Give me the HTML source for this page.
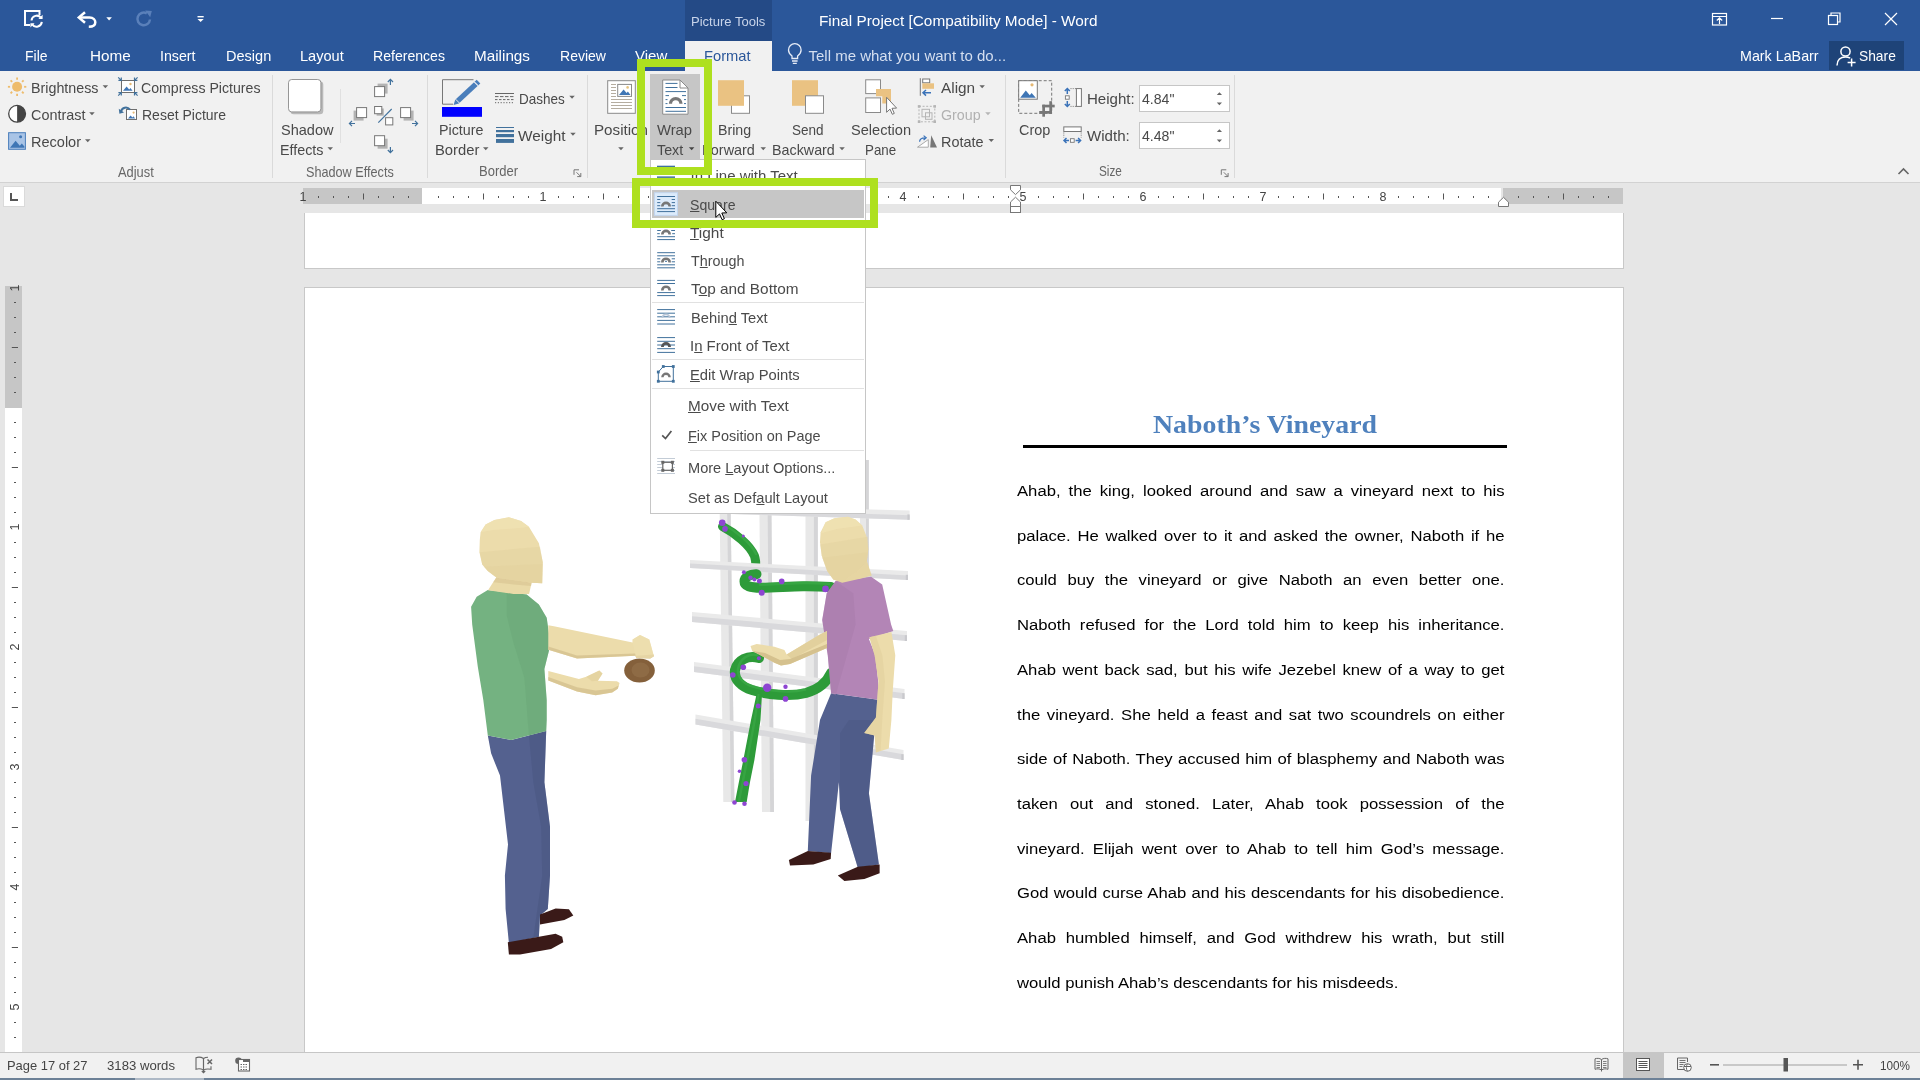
<!DOCTYPE html>
<html lang="en"><head><meta charset="utf-8"><title>Final Project [Compatibility Mode] - Word</title>
<style>

html,body{margin:0;padding:0;}
body{width:1920px;height:1080px;overflow:hidden;position:relative;background:#e6e6e6;font-family:"Liberation Sans",sans-serif;}
.a{position:absolute;}
.t{position:absolute;white-space:pre;line-height:1;transform-origin:0 0;}
#root{position:absolute;left:0;top:0;width:1920px;height:1080px;will-change:transform;}
.t u{text-decoration:underline;text-underline-offset:1px;}
.sep{position:absolute;width:1px;background:#dadada;}
.ln{position:absolute;white-space:nowrap;text-align:justify;text-align-last:justify;line-height:1;color:#000;}
svg{position:absolute;left:0;top:0;overflow:visible;}

</style></head><body>
<div id="root">
<div class="a" style="left:0;top:0;width:1920px;height:71px;background:#2b579a"></div>
<div class="a" style="left:685px;top:0;width:87px;height:41px;background:#244a86"></div>
<div class="a" style="left:0;top:71px;width:1920px;height:111px;background:#f1f1f1"></div>
<div class="a" style="left:685px;top:41px;width:87px;height:31px;background:#f1f1f1"></div>
<div class="a" style="left:0;top:182px;width:1920px;height:1px;background:#d2d2d2"></div>
<div class="a" style="left:1829px;top:41px;width:75px;height:29px;background:#1e4378"></div>
<div class="a" style="left:3px;top:186px;width:22px;height:21px;background:#fff;border:1px solid #dadada;box-sizing:border-box"></div>
<div class="a" style="left:10px;top:193px;width:2px;height:8px;background:#555"></div><div class="a" style="left:10px;top:199px;width:8px;height:2px;background:#555"></div>
<div class="a" style="left:303px;top:188px;width:1320px;height:16px;background:#c6c6c6"></div>
<div class="a" style="left:422px;top:188px;width:1079px;height:16px;background:#fff"></div><div class="a" style="left:1501px;top:188px;width:2px;height:16px;background:#e6e6e6"></div>
<div class="a" style="left:5px;top:286px;width:17px;height:766px;background:#fff"></div>
<div class="a" style="left:5px;top:286px;width:17px;height:122px;background:#c6c6c6"></div>
<div class="a" style="left:304px;top:213px;width:1320px;height:56px;background:#fff;border:1px solid #c8c8c8;border-top:none;box-sizing:border-box"></div>
<div class="a" style="left:304px;top:287px;width:1320px;height:770px;background:#fff;border:1px solid #c8c8c8;box-sizing:border-box"></div>
<svg width="1920" height="1080" viewBox="0 0 1920 1080"><path d="M318.5 196v2M333.5 196v2M348.5 196v2M363.5 193.5v6M378.5 196v2M393.5 196v2M408.5 196v2M438.5 196v2M453.5 196v2M468.5 196v2M483.5 193.5v6M498.5 196v2M513.5 196v2M528.5 196v2M558.5 196v2M573.5 196v2M588.5 196v2M603.5 193.5v6M618.5 196v2M633.5 196v2M648.5 196v2M678.5 196v2M693.5 196v2M708.5 196v2M723.5 193.5v6M738.5 196v2M753.5 196v2M768.5 196v2M798.5 196v2M813.5 196v2M828.5 196v2M843.5 193.5v6M858.5 196v2M873.5 196v2M888.5 196v2M918.5 196v2M933.5 196v2M948.5 196v2M963.5 193.5v6M978.5 196v2M993.5 196v2M1008.5 196v2M1038.5 196v2M1053.5 196v2M1068.5 196v2M1083.5 193.5v6M1098.5 196v2M1113.5 196v2M1128.5 196v2M1158.5 196v2M1173.5 196v2M1188.5 196v2M1203.5 193.5v6M1218.5 196v2M1233.5 196v2M1248.5 196v2M1278.5 196v2M1293.5 196v2M1308.5 196v2M1323.5 193.5v6M1338.5 196v2M1353.5 196v2M1368.5 196v2M1398.5 196v2M1413.5 196v2M1428.5 196v2M1443.5 193.5v6M1458.5 196v2M1473.5 196v2M1488.5 196v2M1518.5 196v2M1533.5 196v2M1548.5 196v2M1563.5 193.5v6M1578.5 196v2M1593.5 196v2M1608.5 196v2" stroke="#555" stroke-width="1"/><text x="303" y="200.6" font-size="12.5" fill="#444" text-anchor="middle" font-family="Liberation Sans, sans-serif">1</text><text x="543" y="200.6" font-size="12.5" fill="#444" text-anchor="middle" font-family="Liberation Sans, sans-serif">1</text><text x="663" y="200.6" font-size="12.5" fill="#444" text-anchor="middle" font-family="Liberation Sans, sans-serif">2</text><text x="783" y="200.6" font-size="12.5" fill="#444" text-anchor="middle" font-family="Liberation Sans, sans-serif">3</text><text x="903" y="200.6" font-size="12.5" fill="#444" text-anchor="middle" font-family="Liberation Sans, sans-serif">4</text><text x="1023" y="200.6" font-size="12.5" fill="#444" text-anchor="middle" font-family="Liberation Sans, sans-serif">5</text><text x="1143" y="200.6" font-size="12.5" fill="#444" text-anchor="middle" font-family="Liberation Sans, sans-serif">6</text><text x="1263" y="200.6" font-size="12.5" fill="#444" text-anchor="middle" font-family="Liberation Sans, sans-serif">7</text><text x="1383" y="200.6" font-size="12.5" fill="#444" text-anchor="middle" font-family="Liberation Sans, sans-serif">8</text><path d="M1010.5 185.5h10v4.3l-5 4.8-5-4.8z" fill="#fff" stroke="#777" stroke-width="1"/><path d="M1010.5 206.5v-4.5l5-4.8 5 4.8v4.5z" fill="#fff" stroke="#777" stroke-width="1"/><rect x="1010.5" y="206.5" width="10" height="6" fill="#fff" stroke="#777" stroke-width="1"/><path d="M1498.5 206.5v-4.3l5-4.9 5 4.9v4.3z" fill="#fff" stroke="#777" stroke-width="1"/><path d="M14 302.5h2M14 317.5h2M14 332.5h2M11.8 347.5h6.2M14 362.5h2M14 377.5h2M14 392.5h2M14 422.5h2M14 437.5h2M14 452.5h2M11.8 467.5h6.2M14 482.5h2M14 497.5h2M14 512.5h2M14 542.5h2M14 557.5h2M14 572.5h2M11.8 587.5h6.2M14 602.5h2M14 617.5h2M14 632.5h2M14 662.5h2M14 677.5h2M14 692.5h2M11.8 707.5h6.2M14 722.5h2M14 737.5h2M14 752.5h2M14 782.5h2M14 797.5h2M14 812.5h2M11.8 827.5h6.2M14 842.5h2M14 857.5h2M14 872.5h2M14 902.5h2M14 917.5h2M14 932.5h2M11.8 947.5h6.2M14 962.5h2M14 977.5h2M14 992.5h2M14 1022.5h2M14 1037.5h2" stroke="#555" stroke-width="1"/><text transform="translate(19 288) rotate(-90)" font-size="12.5" fill="#444" text-anchor="middle" font-family="Liberation Sans, sans-serif">1</text><text transform="translate(19 527) rotate(-90)" font-size="12.5" fill="#444" text-anchor="middle" font-family="Liberation Sans, sans-serif">1</text><text transform="translate(19 647) rotate(-90)" font-size="12.5" fill="#444" text-anchor="middle" font-family="Liberation Sans, sans-serif">2</text><text transform="translate(19 767) rotate(-90)" font-size="12.5" fill="#444" text-anchor="middle" font-family="Liberation Sans, sans-serif">3</text><text transform="translate(19 887) rotate(-90)" font-size="12.5" fill="#444" text-anchor="middle" font-family="Liberation Sans, sans-serif">4</text><text transform="translate(19 1007) rotate(-90)" font-size="12.5" fill="#444" text-anchor="middle" font-family="Liberation Sans, sans-serif">5</text></svg>
<div class="a" style="left:1023px;top:445px;width:484px;height:3px;background:#000"></div>
<div class="ln" style="left:1017px;top:482.88px;width:453.49px;font-size:15.5px;transform:scaleX(1.075);transform-origin:0 0;">Ahab, the king, looked around and saw a vineyard next to his</div>
<div class="ln" style="left:1017px;top:527.61px;width:453.49px;font-size:15.5px;transform:scaleX(1.075);transform-origin:0 0;">palace. He walked over to it and asked the owner, Naboth if he</div>
<div class="ln" style="left:1017px;top:572.34px;width:453.49px;font-size:15.5px;transform:scaleX(1.075);transform-origin:0 0;">could buy the vineyard or give Naboth an even better one.</div>
<div class="ln" style="left:1017px;top:617.07px;width:453.49px;font-size:15.5px;transform:scaleX(1.075);transform-origin:0 0;">Naboth refused for the Lord told him to keep his inheritance.</div>
<div class="ln" style="left:1017px;top:661.80px;width:453.49px;font-size:15.5px;transform:scaleX(1.075);transform-origin:0 0;">Ahab went back sad, but his wife Jezebel knew of a way to get</div>
<div class="ln" style="left:1017px;top:706.53px;width:453.49px;font-size:15.5px;transform:scaleX(1.075);transform-origin:0 0;">the vineyard. She held a feast and sat two scoundrels on either</div>
<div class="ln" style="left:1017px;top:751.26px;width:453.49px;font-size:15.5px;transform:scaleX(1.075);transform-origin:0 0;">side of Naboth. They accused him of blasphemy and Naboth was</div>
<div class="ln" style="left:1017px;top:795.99px;width:453.49px;font-size:15.5px;transform:scaleX(1.075);transform-origin:0 0;">taken out and stoned. Later, Ahab took possession of the</div>
<div class="ln" style="left:1017px;top:840.72px;width:453.49px;font-size:15.5px;transform:scaleX(1.075);transform-origin:0 0;">vineyard. Elijah went over to Ahab to tell him God’s message.</div>
<div class="ln" style="left:1017px;top:885.45px;width:453.49px;font-size:15.5px;transform:scaleX(1.075);transform-origin:0 0;">God would curse Ahab and his descendants for his disobedience.</div>
<div class="ln" style="left:1017px;top:930.18px;width:453.49px;font-size:15.5px;transform:scaleX(1.075);transform-origin:0 0;">Ahab humbled himself, and God withdrew his wrath, but still</div>
<div class="ln" style="left:1017px;top:974.91px;width:453.49px;font-size:15.5px;transform:scaleX(1.075);transform-origin:0 0;text-align-last:left;width:auto;">would punish Ahab’s descendants for his misdeeds.</div>
<svg width="1920" height="1080" viewBox="0 0 1920 1080"><polygon points="719.0,460.0 730.0,460.0 734.4,802.0 723.3,802.0" fill="#e8e8e8" /><polygon points="726.5,460.0 730.0,460.0 734.4,802.0 730.9,802.0" fill="#d5d5d7" /><polygon points="759.0,460.0 771.0,460.0 774.0,812.0 762.0,812.0" fill="#e8e8e8" /><polygon points="767.2,460.0 771.0,460.0 774.0,812.0 770.2,812.0" fill="#d5d5d7" /><polygon points="805.5,460.0 817.8,460.0 817.8,821.0 805.5,821.0" fill="#e8e8e8" /><polygon points="813.9,460.0 817.8,460.0 817.8,821.0 813.9,821.0" fill="#d5d5d7" /><polygon points="860.0,460.0 868.8,460.0 868.8,830.0 860.0,830.0" fill="#e8e8e8" /><polygon points="866.0,460.0 868.8,460.0 868.8,830.0 866.0,830.0" fill="#d5d5d7" /><path d="M722.5 526.5C735 533 750 545 754.5 556C756 560 756 563 755.5 568" fill="none" stroke="#2d9b39" stroke-width="9" stroke-linecap="round"/><path d="M723.5 524.5C736 531 751 543 756 554" fill="none" stroke="#3fae4b" stroke-width="2.5" stroke-linecap="round" opacity="0.6"/><polygon points="700.0,505.0 909.6,510.5 909.6,519.8 700.0,513.0" fill="#eaeaea" /><polygon points="700.0,508.4 909.6,515.2 909.6,519.8 700.0,513.0" fill="#d9d9dc" /><polygon points="907.4,514.4 909.6,514.4 909.6,519.8 907.4,519.8" fill="#c9c9cd" /><polygon points="690.0,560.0 908.0,571.0 908.0,580.0 690.0,568.0" fill="#eaeaea" /><polygon points="690.0,563.4 908.0,575.4 908.0,580.0 690.0,568.0" fill="#d9d9dc" /><polygon points="905.8,574.8 908.0,574.8 908.0,580.0 905.8,580.0" fill="#c9c9cd" /><polygon points="692.0,612.0 907.0,631.0 907.0,641.0 692.0,622.0" fill="#eaeaea" /><polygon points="692.0,616.2 907.0,635.2 907.0,641.0 692.0,622.0" fill="#d9d9dc" /><polygon points="904.8,635.2 907.0,635.2 907.0,641.0 904.8,641.0" fill="#c9c9cd" /><polygon points="694.0,662.0 904.5,689.0 904.5,699.0 694.0,672.0" fill="#eaeaea" /><polygon points="694.0,666.2 904.5,693.2 904.5,699.0 694.0,672.0" fill="#d9d9dc" /><polygon points="902.3,693.2 904.5,693.2 904.5,699.0 902.3,699.0" fill="#c9c9cd" /><polygon points="695.5,714.5 903.5,750.0 903.5,760.0 695.5,724.5" fill="#eaeaea" /><polygon points="695.5,718.7 903.5,754.2 903.5,760.0 695.5,724.5" fill="#d9d9dc" /><polygon points="901.3,754.2 903.5,754.2 903.5,760.0 901.3,760.0" fill="#c9c9cd" /><g fill="none" stroke="#2d9b39" stroke-linecap="round"><path d="M756.5 574.2C750 574 744.5 577 744.5 581.5C744.5 586 750 587.6 761 587.8C772 587.8 790 586.5 803 586.3C812 586.2 822 586.5 831 587" stroke-width="10"/><path d="M759 658C748 654.5 737.5 660 735 670C733.5 680 742 687 752 690C766 694.5 790 697 806 693C818 689.5 826.5 683 831 673" stroke-width="10"/></g><g fill="none" stroke="#3fae4b" stroke-linecap="round" opacity="0.6"><path d="M760 584.5C772 584.5 790 583.3 803 583.1C812 583 822 583.3 829 583.8" stroke-width="2.5"/><path d="M757 655C748 653 740 659 738 669C737.5 677 743 683.5 753 686.5C766 690.5 790 693.5 805 689.5" stroke-width="2.5"/></g><polygon points="756.6,694.0 762.0,694.0 760.5,720.0 754.4,760.0 750.0,782.0 746.7,802.0 735.0,802.0 738.9,782.0 743.3,760.0 751.0,720.0" fill="#2d9b39" /><polygon points="757.6,694.0 759.6,694.0 756.0,720.0 748.4,760.0 744.0,782.0 740.0,802.0 737.5,802.0 741.4,782.0 745.8,760.0 753.5,720.0" fill="#3fae4b" opacity="0.5"/><circle cx="722.2" cy="522.8" r="3.3" fill="#8e46d2"/><circle cx="725" cy="528.9" r="2.8" fill="#8e46d2"/><circle cx="743.3" cy="536" r="1.5" fill="#8e46d2"/><circle cx="743.9" cy="572.2" r="2" fill="#8e46d2"/><circle cx="750.5" cy="577.8" r="2.2" fill="#8e46d2"/><circle cx="754.4" cy="579.4" r="2" fill="#8e46d2"/><circle cx="759.4" cy="581" r="2.5" fill="#8e46d2"/><circle cx="781.7" cy="581.4" r="2.8" fill="#8e46d2"/><circle cx="761.7" cy="592.8" r="3" fill="#8e46d2"/><circle cx="825.5" cy="588.9" r="3.3" fill="#8e46d2"/><circle cx="743.3" cy="667.2" r="2.8" fill="#8e46d2"/><circle cx="732.8" cy="675" r="2.8" fill="#8e46d2"/><circle cx="767.2" cy="687.8" r="4.2" fill="#8e46d2"/><circle cx="785.5" cy="686.7" r="2.2" fill="#8e46d2"/><circle cx="785.5" cy="698.9" r="2.8" fill="#8e46d2"/><circle cx="758.3" cy="706" r="2.5" fill="#8e46d2"/><circle cx="758.9" cy="658.3" r="2" fill="#8e46d2"/><circle cx="744.4" cy="759.8" r="2.8" fill="#8e46d2"/><circle cx="739.5" cy="771.3" r="1.8" fill="#8e46d2"/><circle cx="746" cy="783.5" r="2.6" fill="#8e46d2"/><circle cx="734.5" cy="802.5" r="2.3" fill="#8e46d2"/><circle cx="744.5" cy="803.8" r="2.3" fill="#8e46d2"/><polygon points="831.1,693.3 880.0,700.0 876.7,720.0 875.6,720.0 868.9,793.3 878.9,864.4 857.8,867.8 840.0,808.9 838.9,782.2 831.1,853.3 807.8,851.1 811.1,775.6 820.0,720.0" fill="#54618f" /><polygon points="840.0,733.3 848.9,720.0 875.6,720.0 868.9,793.3 878.9,864.4 857.8,867.8 840.0,808.9" fill="#48547f" opacity="0.35"/><polygon points="788.9,860.0 807.8,851.1 831.1,852.7 830.7,858.9 813.3,864.4 790.0,865.6" fill="#3a1a18" /><polygon points="837.8,875.6 857.8,866.7 879.6,864.4 879.6,873.3 864.4,878.9 844.4,881.1" fill="#3a1a18" /><polygon points="835.6,581.1 871.1,576.7 882.2,584.4 891.1,624.4 893.3,631.1 868.9,638.9 875.6,655.6 880.0,700.0 831.1,693.3 827.8,655.6 822.2,620.0 826.7,593.3" fill="#b385b6" /><polygon points="826.7,593.3 835.6,581.1 853.3,593.3 855.6,624.4 835.6,695.6 831.1,693.3 827.8,655.6 822.2,620.0" fill="#a477a8" opacity="0.4"/><polygon points="869.4,637.2 891.4,632.0 895.3,655.3 892.7,691.6 891.4,720.1 888.8,748.5 875.9,752.4 874.6,735.6 864.2,733.0 875.9,717.5 878.5,681.2 874.6,655.3" fill="#ecdcab" /><polygon points="869.4,637.2 875.9,635.7 882.4,655.3 885.0,681.2 882.4,717.5 880.6,750.6 875.9,752.4 874.6,735.6 864.2,733.0 875.9,717.5 878.5,681.2 874.6,655.3" fill="#e2d09d" opacity="0.55"/><polygon points="750.5,646.0 756.7,643.9 774.4,646.7 784.4,650.0 786.7,654.4 820.0,634.4 827.0,631.0 827.0,648.0 790.0,663.9 781.0,665.5 774.4,662.8 761.0,655.5 752.2,651.0" fill="#ecdcab" /><polygon points="786.7,654.4 820.0,634.4 827.0,631.0 827.0,640.0 792.0,659.0" fill="#e2d09d" /><polygon points="752.2,651.0 761.0,655.5 774.4,662.8 781.0,665.5 790.0,663.9 827.0,648.0 827.0,644.0 790.0,659.0 780.0,660.0 765.0,653.0" fill="#d5c18e" /><polygon points="862.2,562.2 866.7,560.6 871.7,575.6 862.2,578.3 842.2,582.8 833.3,579.4" fill="#e6d5a2" /><polygon points="825.6,522.2 834.4,518.3 847.8,516.7 855.6,519.4 862.2,525.6 866.7,536.7 868.3,548.9 866.7,562.2 857.8,571.1 842.2,581.7 833.3,579.4 827.2,571.1 821.7,555.6 820.0,542.2 820.6,532.2" fill="#ecdcab" /><polygon points="820.2,544.4 867.8,536.7 868.3,548.9 866.7,562.2 857.8,571.1 842.2,581.7 833.3,579.4 827.2,571.1 821.7,555.6" fill="#e2d09d" opacity="0.45"/><polygon points="822.2,557.8 868.0,552.2 866.7,562.2 857.8,571.1 842.2,581.7 833.3,579.4 827.2,571.1" fill="#e2d09d" opacity="0.45"/><polygon points="825.6,522.2 834.4,518.3 847.8,516.7 855.6,519.4 862.2,525.6 836.7,528.9 821.1,533.3" fill="#f1e3b4" opacity="0.7"/><polygon points="487.8,735.6 511.1,740.0 546.2,731.1 544.4,782.2 550.0,826.7 550.0,875.6 547.8,908.9 540.0,915.6 538.9,936.7 508.9,943.3 505.6,908.9 504.9,875.6 508.0,844.4 500.0,775.6 491.1,753.3" fill="#54618f" /><polygon points="528.9,735.6 546.2,731.1 544.4,782.2 550.0,826.7 550.0,875.6 547.8,908.9 540.0,915.6 538.9,936.7 533.3,937.8 542.2,875.6 541.1,826.7 533.3,782.2" fill="#48547f" opacity="0.45"/><polygon points="540.0,914.4 555.6,908.4 568.9,909.3 573.3,915.6 564.4,920.0 540.0,924.4" fill="#3a1a18" /><polygon points="507.8,942.2 538.9,936.7 555.6,933.8 562.2,936.7 563.3,942.2 551.1,948.9 520.0,954.4 508.9,954.4" fill="#3a1a18" /><polygon points="487.8,590.0 506.7,592.2 526.7,594.4 538.9,604.4 546.7,617.8 548.9,633.3 548.9,651.1 544.4,668.9 546.7,700.0 546.7,720.0 546.2,731.1 511.1,740.0 487.8,735.6 483.3,700.0 477.8,666.7 472.2,624.4 471.1,606.7 476.7,596.7" fill="#74b281" /><polygon points="506.7,592.2 526.7,594.4 538.9,604.4 546.7,617.8 548.9,633.3 548.9,651.1 544.4,668.9 546.7,700.0 546.7,720.0 546.2,731.1 528.9,735.6 524.4,677.8 513.3,642.2 506.7,615.6" fill="#63a070" opacity="0.3"/><polygon points="548.3,671.1 578.9,679.0 586.3,676.7 599.3,670.6 602.5,673.4 597.9,680.8 616.9,681.3 619.6,683.1 617.8,688.7 612.2,692.4 595.6,695.2 577.0,691.5 548.3,680.4" fill="#ecdcab" /><polygon points="548.3,677.1 577.0,687.3 595.6,690.6 612.2,688.7 618.7,685.5 617.8,688.7 612.2,692.4 595.6,695.2 577.0,691.5 548.3,680.4" fill="#d5c18e" opacity="0.8"/><polygon points="586.3,676.7 599.3,670.6 602.5,673.4 597.9,680.8 591.9,681.3" fill="#e2d09d" opacity="0.7"/><ellipse cx="639.5" cy="670.4" rx="15.3" ry="12" fill="#84603b"/><ellipse cx="640.5" cy="670" rx="9" ry="7.5" fill="#93704a" opacity="0.7"/><polygon points="548.3,625.3 553.9,626.2 632.6,642.4 632.6,639.6 640.0,635.0 649.3,639.6 653.9,656.3 650.2,658.6 636.3,658.1 635.4,655.8 577.0,658.6 548.3,649.8" fill="#ecdcab" /><polygon points="548.3,646.6 577.0,655.4 635.4,653.5 636.3,655.8 653.4,654.4 653.9,656.3 650.2,658.6 636.3,658.1 635.4,655.8 577.0,658.6 548.3,649.8" fill="#d5c18e" opacity="0.8"/><polygon points="632.6,642.4 632.6,639.6 640.0,635.0 649.3,639.6 653.9,656.3 650.2,658.6 636.3,658.1 635.4,655.8" fill="#efe0b0" opacity="0.6"/><polygon points="496.7,576.7 520.0,580.0 531.7,582.2 529.1,593.9 513.3,593.9 488.0,590.2" fill="#eadaa8" /><polygon points="496.7,576.7 520.0,580.0 531.7,582.2 531.1,586.1 513.3,584.4 493.3,582.2" fill="#d5c18e" opacity="0.55"/><polygon points="480.6,532.2 485.6,524.4 494.4,520.0 508.9,517.2 521.1,521.1 528.9,526.7 538.9,543.3 542.8,562.2 542.2,583.3 531.1,582.8 520.0,581.1 496.7,577.8 487.8,571.1 482.2,564.4 479.4,552.2 479.8,540.0" fill="#ecdcab" /><polygon points="479.8,552.2 540.0,546.7 542.8,562.2 542.2,583.3 531.1,582.8 520.0,581.1 496.7,577.8 487.8,571.1 482.2,564.4" fill="#e2d09d" opacity="0.45"/><polygon points="483.9,566.7 542.4,563.9 542.2,583.3 531.1,582.8 520.0,581.1 496.7,577.8 487.8,571.1" fill="#e2d09d" opacity="0.45"/><polygon points="480.6,532.2 485.6,524.4 494.4,520.0 508.9,517.2 521.1,521.1 528.9,526.7 522.2,527.8 493.3,530.0" fill="#f1e3b4" opacity="0.7"/></svg>
<div class="a" style="left:0;top:1052px;width:1920px;height:28px;background:#f1f1f1;border-top:1px solid #c6c6c6;box-sizing:border-box"></div>
<div class="a" style="left:1623px;top:1053px;width:41px;height:25px;background:#c6c6c6"></div>
<div class="a" style="left:0;top:1078px;width:1920px;height:2px;background:#6d8197"></div><div class="a" style="left:135px;top:1078px;width:69px;height:2px;background:#aeb9c6"></div>
<svg width="1920" height="1080" viewBox="0 0 1920 1080"><g fill="none" stroke="#666" stroke-width="1.1"><path d="M203.5 1058.5c-2.5-1.5-5.5-1.5-7.5-0.8v11.6c2-0.7 5-0.7 7.5.8zM203.5 1058.5c1.5-1 3-1.3 4.5-1.3M203.5 1070.1c1.5-1 4-1.4 7.5-0.8v-3"/><path d="M203.5 1058.5v14M201.8 1071l1.700 1.700 1.700-1.700"/><path d="M207.5 1059.5l4.5 4.5M212 1059.5l-4.5 4.5" stroke-width="1.5"/></g><circle cx="238.5" cy="1060.8" r="3.3" fill="#666"/><rect x="238.5" y="1059.5" width="11" height="11.5" fill="#fff" stroke="#666" stroke-width="1.1"/><rect x="243" y="1059" width="7" height="3" fill="#666"/><path d="M240.5 1064.5h7.5M240.5 1067h7.5M240.5 1069.5h7.5" stroke="#666" stroke-width="1" stroke-dasharray="1.5 1"/><g fill="none" stroke="#666" stroke-width="1"><path d="M1601.5 1059.5c-2-1.4-4.5-1.4-6.5-0.700v10.5c2-0.700 4.5-0.700 6.5 0.700c2-1.4 4.5-1.4 6.5-0.700v-10.5c-2-0.700-4.5-0.700-6.5 0.700zM1601.5 1059.5v12"/><path d="M1596.5 1061.5h3.5M1596.5 1063.5h3.5M1596.5 1065.5h3.5M1596.5 1067.5h3.5M1603 1061.5h3.5M1603 1063.5h3.5M1603 1065.5h3.5M1603 1067.5h3.5" stroke-width="0.8"/></g><rect x="1636.5" y="1058.5" width="13" height="12" fill="#fff" stroke="#555" stroke-width="1"/><path d="M1638.5 1061.5h9M1638.5 1063.5h9M1638.5 1065.5h9M1638.5 1067.5h9" stroke="#555" stroke-width="1"/><g fill="none" stroke="#666" stroke-width="1"><path d="M1686 1069.5h-8.5v-11.5h10v4"/><path d="M1679.5 1060.5h6M1679.5 1062.5h6M1679.5 1064.5h4M1679.5 1066.5h3" stroke-width="0.9"/><circle cx="1687.5" cy="1067.5" r="3.8" fill="#fff"/><path d="M1684 1066.5h7M1687.5 1063.8c-1.5 2-1.5 5.5 0 7.5"/></g><rect x="1710" y="1064" width="9" height="1.6" fill="#555"/><rect x="1723" y="1064.5" width="124" height="1" fill="#a0a0a0"/><rect x="1783.5" y="1058" width="4.5" height="13.5" fill="#555"/><path d="M1853 1064.8h10M1858 1059.8v10" stroke="#555" stroke-width="1.6"/></svg>
<div class="sep" style="left:272px;top:75px;height:103px"></div>
<div class="sep" style="left:427px;top:75px;height:103px"></div>
<div class="sep" style="left:587px;top:75px;height:103px"></div>
<div class="sep" style="left:1005px;top:75px;height:103px"></div>
<div class="sep" style="left:1234px;top:75px;height:103px"></div>
<div class="sep" style="left:340px;top:89px;height:54px;background:#e0e0e0"></div>
<div class="a" style="left:650px;top:74px;width:50px;height:86px;background:#c6c6c6"></div>
<div class="a" style="left:1139px;top:85px;width:91px;height:27px;background:#fff;border:1px solid #c6c6c6;box-sizing:border-box"></div>
<div class="a" style="left:1139px;top:122px;width:91px;height:27px;background:#fff;border:1px solid #c6c6c6;box-sizing:border-box"></div>
<svg width="1920" height="1080" viewBox="0 0 1920 1080"><g fill="none" stroke="#fff" stroke-width="2"><path d="M30 25H25V11H39.5V15"/><path d="M31.5 20.5a5.3 5.3 0 0 1 9.6-2.6M41.8 21.8a5.3 5.3 0 0 1-9.6 2.6"/></g><path d="M42.6 14.8v4.2h-4.2zM30.4 27.5v-4.2h4.2z" fill="#fff"/><path d="M80 17.5H89.5C93.5 17.5 95.3 20 95.3 22.3C95.3 25 93 26.8 88.8 26.8" fill="none" stroke="#fff" stroke-width="2.5"/><path d="M85 12.2L78.8 17.5L85 22.8" fill="none" stroke="#fff" stroke-width="2.5"/><path d="M106.3 17.3h5.6l-2.8 3.1z" fill="#fff"/><path d="M146.8 13.4A6.3 6.3 0 1 0 150 19.5" fill="none" stroke="#5a80ba" stroke-width="2.5"/><path d="M145.2 10.4l6.6 0.6-1.6 6.2z" fill="#5a80ba"/><rect x="197.5" y="16" width="6.2" height="1.4" fill="#fff"/><path d="M197.5 19h6.2l-3.1 3z" fill="#fff"/><g fill="none" stroke="#fff" stroke-width="1.2"><rect x="1712.5" y="13.5" width="14" height="11.5"/><path d="M1712.5 16.5h14M1719.5 24v-6M1716.8 20.5l2.7-2.7 2.7 2.7"/><path d="M1771 18.5h12"/><rect x="1828.5" y="15.5" width="9" height="9"/><path d="M1831 15.5v-2.5h9v9h-2.5"/><path d="M1885 13l12 12M1897 13l-12 12"/></g><g fill="none" stroke="#e6ecf7" stroke-width="1.3"><path d="M792 58.5v-2.5c-2.5-2-3.5-3.6-3.5-6a6.3 6.3 0 0 1 12.6 0c0 2.4-1 4-3.5 6v2.5z"/><path d="M792 61h5.6M792.8 63.3h4"/></g><g fill="none" stroke="#fff" stroke-width="1.5"><circle cx="1845.5" cy="51.5" r="4.6"/><path d="M1837 65.5c0-5.5 3.5-8.6 8.5-8.6 1.8 0 3.4 0.4 4.6 1.2"/><path d="M1851.6 58.5v8M1847.6 62.5h8"/></g><path d="M1898.5 174l5-5 5 5" fill="none" stroke="#666" stroke-width="1.6"/><circle cx="17.1" cy="86.8" r="5" fill="#eebc6c"/><g stroke="#eebc6c" stroke-width="1.8"><path d="M17.1 86.8m7.00 0.00l2.20 0.00"/><path d="M17.1 86.8m-7.00 0.00l-2.20 0.00"/><path d="M17.1 86.8m0.00 7.00l0.00 2.20"/><path d="M17.1 86.8m0.00 -7.00l0.00 -2.20"/><path d="M17.1 86.8m4.95 4.95l1.56 1.56"/><path d="M17.1 86.8m-4.95 4.95l-1.56 1.56"/><path d="M17.1 86.8m4.95 -4.95l1.56 -1.56"/><path d="M17.1 86.8m-4.95 -4.95l-1.56 -1.56"/></g><path d="M102.6 85.3h5.5l-2.75 3z" fill="#666"/><circle cx="17.1" cy="113.8" r="8.4" fill="#fff" stroke="#444" stroke-width="1.3"/><path d="M17.1 105.4a8.4 8.4 0 0 1 0 16.8z" fill="#444"/><path d="M89.2 112.3h5.5l-2.75 3z" fill="#666"/><rect x="8.6" y="132.7" width="16.8" height="16.6" fill="#a9c4e6" stroke="#4a7ebb" stroke-width="1"/><path d="M10 147.8l5.6-7 4.2 5 2-2.4 2.6 3.2v1.2z" fill="#3f76b5"/><circle cx="20.6" cy="136.8" r="1.5" fill="#3f76b5"/><path d="M85 139.3h5.5l-2.75 3z" fill="#666"/><rect x="121.5" y="80.5" width="13" height="12" fill="#fff" stroke="#6e6e6e" stroke-width="1"/><path d="M123 90.8l3.6-4.4 2.6 3 1.2-1.4 2.2 2.8z" fill="#3f76b5"/><circle cx="130.5" cy="84" r="1.2" fill="#e5b873"/><g stroke="#41719c" stroke-width="1.2" fill="none"><path d="M118.2 77.3l2.8 2.8M118.4 80.4h2.9v-2.9M137.6 77.3l-2.8 2.8M137.4 80.4h-2.9v-2.9M118.2 95.7l2.8-2.8M118.4 92.6h2.9v2.9M137.6 95.7l-2.8-2.8M137.4 92.6h-2.9v2.9"/></g><rect x="126.5" y="109.5" width="10" height="10" fill="#fff" stroke="#6e6e6e" stroke-width="1"/><path d="M128 118.6l2.6-3.2 1.8 2 1-1.1 1.8 2.3z" fill="#3f76b5"/><circle cx="133.6" cy="112.6" r="1.1" fill="#e5b873"/><path d="M121 111.5c1-4 6-5.5 9-1.8" fill="none" stroke="#41719c" stroke-width="2"/><path d="M118.8 108.8l0.6 5 4.6-1.2z" fill="#41719c"/><rect x="290.3" y="81.3" width="33" height="33" rx="3.5" fill="#b9b9b9"/><rect x="288.5" y="79.5" width="32.4" height="32.4" rx="3.2" fill="#fff" stroke="#8a8a8a" stroke-width="0.9"/><path d="M327.5 147.3h5.5l-2.75 3z" fill="#666"/><rect x="377.6" y="83.6" width="10" height="10" fill="#b3b3b3"/><rect x="374.6" y="86.6" width="10" height="10" fill="#fff" stroke="#777" stroke-width="1"/><rect x="353.6" y="110.6" width="10" height="10" fill="#b3b3b3"/><rect x="356.6" y="107.6" width="10" height="10" fill="#fff" stroke="#777" stroke-width="1"/><rect x="403.6" y="110.6" width="10" height="10" fill="#b3b3b3"/><rect x="400.6" y="107.6" width="10" height="10" fill="#fff" stroke="#777" stroke-width="1"/><rect x="377.6" y="138.7" width="10" height="10" fill="#b3b3b3"/><rect x="374.6" y="135.7" width="10" height="10" fill="#fff" stroke="#777" stroke-width="1"/><rect x="376.6" y="108.5" width="7.2" height="7.2" fill="#b3b3b3"/><rect x="374.6" y="106.5" width="7.2" height="7.2" fill="#fff" stroke="#777" stroke-width="1"/><path d="M391.7 109L378.3 122.7" stroke="#41719c" stroke-width="1.1"/><rect x="385.6" y="117.7" width="7.2" height="7.2" fill="#fff" stroke="#777" stroke-width="1"/><g fill="none" stroke="#41719c" stroke-width="1.2"><path d="M390.4 85v-5.6M387.8 82l2.6-2.6 2.6 2.6"/><path d="M390.4 147v5.6M387.8 150l2.6 2.6 2.6-2.6"/><path d="M355 123.5h-5.6M352 120.9l-2.6 2.6 2.6 2.6"/><path d="M412 123.5h5.6M415 120.9l2.6 2.6-2.6 2.6"/></g><path d="M473.5 79.7H442.5V104.2H453" fill="none" stroke="#777" stroke-width="1"/><path d="M453.6 105l1.6-5.2 21.5-20 3.6 3.6-21.5 20z" fill="#4a7ebb"/><path d="M474.2 81.8l3.8 3.8" stroke="#f1f1f1" stroke-width="1.1"/><path d="M455.6 99.2l3.8 3.8" stroke="#f1f1f1" stroke-width="1"/><rect x="442" y="107" width="40" height="9.8" fill="#0000ff"/><path d="M483 147.3h5.5l-2.75 3z" fill="#666"/><g stroke="#666" stroke-width="1"><path d="M495 93.5h19"/><path d="M495 96.6h19" stroke-dasharray="3.5 1.5"/><path d="M495 99.6h19" stroke-dasharray="2.5 1.5"/><path d="M495 102.7h19" stroke-dasharray="1.2 1.6"/></g><path d="M569.3 95.8h5.5l-2.75 3z" fill="#666"/><g fill="#41719c"><rect x="496" y="127" width="18" height="1"/><rect x="496" y="130" width="18" height="2.2"/><rect x="496" y="134" width="18" height="3.2"/><rect x="496" y="139" width="18" height="3.9"/></g><path d="M570.2 132.8h5.5l-2.75 3z" fill="#666"/><path d="M574 174.8V169.8H579M576.5 172.3L580.5 176.3M580.8 173.0V176.60000000000002H577.2" fill="none" stroke="#777" stroke-width="1"/><path d="M1221.3 174.8V169.8H1226.3M1223.8 172.3L1227.8 176.3M1228.1 173.0V176.60000000000002H1224.5" fill="none" stroke="#777" stroke-width="1"/><rect x="607.7" y="80.7" width="27.6" height="32.6" fill="#fff" stroke="#8a8a8a" stroke-width="1"/><rect x="617.7" y="84.4" width="13.8" height="12" fill="#fff" stroke="#8a8a8a" stroke-width="1"/><path d="M619 95l4.6-5.6 3 3.5 1.3-1.5 2.6 3.6z" fill="#3f76b5"/><circle cx="627.6" cy="87.4" r="1.3" fill="#e5c27d"/><g stroke="#b5ada0" stroke-width="1"><path d="M611 84.5h5M611 87.5h5M611 90.5h5M611 93.5h5M611 96.5h5M611 99.5h21M611 102.5h21M611 105.5h21M611 108.5h21"/></g><path d="M618.2 147.3h5.5l-2.75 3z" fill="#666"/><path d="M662.7 80H680l8 8v26.2H662.7z" fill="#fff" stroke="#8a8a8a" stroke-width="1"/><path d="M680 80v8h8" fill="none" stroke="#8a8a8a" stroke-width="1"/><g stroke="#41719c" stroke-width="1"><path d="M665.5 83.4h12M665.5 87.5h12M665.5 91.6h20.5M665.5 95.6h3.5M682 95.6h4M665.5 99.6h2M684 99.6h2M665.5 103.6h2M684 103.6h2M665.5 107.5h20.5M665.5 111.3h20.5"/></g><path d="M668.8 103.8a6.9 6.9 0 0 1 13.8 0h-3.3a3.6 3.6 0 0 0-7.2 0z" fill="#777"/><path d="M688.9 147.3h5.5l-2.75 3z" fill="#444"/><rect x="731.5" y="95.8" width="18" height="17.5" fill="#fff" stroke="#8a8a8a" stroke-width="1"/><rect x="718" y="80.2" width="26" height="25.6" fill="#eac282"/><path d="M760.5 147.3h5.5l-2.75 3z" fill="#666"/><rect x="792" y="80.2" width="26" height="25.6" fill="#eac282"/><rect x="805.5" y="95.8" width="18" height="17.5" fill="#fff" stroke="#8a8a8a" stroke-width="1"/><path d="M839.3 147.3h5.5l-2.75 3z" fill="#666"/><rect x="865.7" y="79.8" width="14.8" height="13.8" fill="#fff" stroke="#8a8a8a" stroke-width="1"/><rect x="865.7" y="97.9" width="14.8" height="14.6" fill="#fff" stroke="#8a8a8a" stroke-width="1"/><path d="M876 89h15v14.5h-8.7v-7.3H876z" fill="#eac282"/><path d="M886.6 97.3v15l3.4-3.2 2.3 5.2 2-0.9-2.3-5.1 4.6-0.2z" fill="#fff" stroke="#777" stroke-width="1"/><path d="M920.3 78.2v17.6" stroke="#777" stroke-width="1"/><rect x="922.7" y="79" width="7" height="3.8" fill="#fff" stroke="#777" stroke-width="1"/><rect x="922.3" y="83.3" width="11.7" height="5.5" fill="#eac282"/><path d="M923 92.8h8M926 90l-3 2.8 3 2.8" fill="none" stroke="#3b73b9" stroke-width="1.5"/><path d="M979.4 85.3h5.5l-2.75 3z" fill="#666"/><g fill="none" stroke="#b5b5b5" stroke-width="1"><rect x="919" y="106.3" width="15.8" height="15.5" stroke-dasharray="2 1.6"/><rect x="922" y="109.3" width="7.5" height="7.5"/><rect x="925.5" y="112.8" width="6.5" height="6.5"/></g><g fill="#b5b5b5"><rect x="917.8" y="105.1" width="2.6" height="2.6"/><rect x="933.4" y="105.1" width="2.6" height="2.6"/><rect x="917.8" y="120.4" width="2.6" height="2.6"/><rect x="933.4" y="120.4" width="2.6" height="2.6"/></g><path d="M985.2 112.2h5.5l-2.75 3z" fill="#b5b5b5"/><path d="M917.5 147.2h10.8v-7.6z" fill="#fff" stroke="#aaa" stroke-width="1"/><path d="M930.2 147.6h6.8l-5.8-12.4z" fill="#777"/><path d="M919.6 141.8c0-2.6 2-4 5.4-4M923.6 135.6l2.6 2.2-2.6 2.2" fill="none" stroke="#3b73b9" stroke-width="1.2"/><path d="M988.5 139h5.5l-2.75 3z" fill="#666"/><rect x="1018.7" y="80.7" width="33" height="32.6" fill="none" stroke="#777" stroke-width="1" stroke-dasharray="3 2"/><rect x="1018.7" y="80.7" width="18.6" height="18.5" fill="#fff" stroke="#777" stroke-width="1"/><path d="M1020.2 97.8l5.6-7.2 4 4.6 1.8-2.2 4.2 4.8z" fill="#3f76b5"/><circle cx="1032" cy="84.8" r="1.6" fill="#e5b873"/><g fill="#777"><rect x="1042.3" y="104.7" width="2.7" height="12"/><rect x="1049.3" y="101.2" width="2.7" height="12.4"/><rect x="1042.3" y="104.7" width="12.4" height="2.7"/><rect x="1039.2" y="111" width="12.8" height="2.7"/></g><rect x="1076.4" y="88.6" width="5" height="17.8" fill="#fff" stroke="#777" stroke-width="1"/><rect x="1065.4" y="95.8" width="3.8" height="3.4" fill="#fff" stroke="#777" stroke-width="0.9"/><g fill="none" stroke="#3b73b9" stroke-width="1.5"><path d="M1067.3 94v-5M1064.8 91l2.5-2.5 2.5 2.5M1067.3 101v5M1064.8 104l2.5 2.5 2.5-2.5"/></g><path d="M1070.5 88.6h5.5M1070.5 106.4h5.5" stroke="#777" stroke-width="1" stroke-dasharray="1 1.2"/><rect x="1063.8" y="126.9" width="17.4" height="4.6" fill="#fff" stroke="#777" stroke-width="1"/><rect x="1070.4" y="138.7" width="3.8" height="3.6" fill="#fff" stroke="#777" stroke-width="0.9"/><g fill="none" stroke="#3b73b9" stroke-width="1.5"><path d="M1069 140.5h-5M1066.5 138l-2.5 2.5 2.5 2.5M1075.6 140.5h5M1078.1 138l2.5 2.5-2.5 2.5"/></g><path d="M1063.8 132.5v5M1081.2 132.5v5" stroke="#777" stroke-width="1" stroke-dasharray="1 1.2"/><path d="M1216.8 95l2.6-2.8 2.6 2.8z" fill="#666"/><path d="M1216.8 102.5l2.6 2.8 2.6-2.8z" fill="#666"/><path d="M1216.8 132l2.6-2.8 2.6 2.8z" fill="#666"/><path d="M1216.8 139.5l2.6 2.8 2.6-2.8z" fill="#666"/></svg>
<span class="t" style="left:1153.00px;top:411.67px;font-size:25px;color:#4f81bd;font-family:'Liberation Serif', serif;font-weight:700;transform:scaleX(1.1134);">Naboth’s Vineyard</span>
<span class="t" style="left:7.00px;top:1058.57px;font-size:13.5px;color:#444444;transform:scaleX(0.9574);">Page 17 of 27</span>
<span class="t" style="left:107.00px;top:1058.57px;font-size:13.5px;color:#444444;transform:scaleX(0.9743);">3183 words</span>
<span class="t" style="left:1880.00px;top:1058.57px;font-size:13.5px;color:#444444;transform:scaleX(0.8688);">100%</span>
<span class="t" style="left:25.00px;top:48.00px;font-size:15px;color:#ffffff;transform:scaleX(0.9308);">File</span>
<span class="t" style="left:90.00px;top:47.80px;font-size:15px;color:#ffffff;transform:scaleX(1.0184);">Home</span>
<span class="t" style="left:160.00px;top:47.80px;font-size:15px;color:#ffffff;transform:scaleX(0.9463);">Insert</span>
<span class="t" style="left:225.50px;top:47.80px;font-size:15px;color:#ffffff;transform:scaleX(0.9689);">Design</span>
<span class="t" style="left:300.00px;top:47.80px;font-size:15px;color:#ffffff;transform:scaleX(0.9712);">Layout</span>
<span class="t" style="left:373.00px;top:47.80px;font-size:15px;color:#ffffff;transform:scaleX(0.9385);">References</span>
<span class="t" style="left:474.00px;top:47.80px;font-size:15px;color:#ffffff;transform:scaleX(1.0176);">Mailings</span>
<span class="t" style="left:560.00px;top:47.80px;font-size:15px;color:#ffffff;transform:scaleX(0.9352);">Review</span>
<span class="t" style="left:635.00px;top:47.80px;font-size:15px;color:#ffffff;">View</span>
<span class="t" style="left:704.40px;top:47.80px;font-size:15px;color:#2b579a;transform:scaleX(0.9807);">Format</span>
<span class="t" style="left:808.50px;top:47.80px;font-size:15px;color:#d5dff0;">Tell me what you want to do...</span>
<span class="t" style="left:691.20px;top:14.77px;font-size:13.5px;color:#c8d4ea;transform:scaleX(0.9656);">Picture Tools</span>
<span class="t" style="left:819.00px;top:12.58px;font-size:15.5px;color:#ffffff;transform:scaleX(0.9897);">Final Project [Compatibility Mode] - Word</span>
<span class="t" style="left:1740.00px;top:47.80px;font-size:15px;color:#ffffff;transform:scaleX(0.9524);">Mark LaBarr</span>
<span class="t" style="left:1859.00px;top:47.80px;font-size:15px;color:#ffffff;transform:scaleX(0.9193);">Share</span>
<span class="t" style="left:30.50px;top:80.30px;font-size:15px;color:#494949;transform:scaleX(0.9524);">Brightness</span>
<span class="t" style="left:30.50px;top:107.30px;font-size:15px;color:#494949;transform:scaleX(0.9611);">Contrast</span>
<span class="t" style="left:30.50px;top:134.30px;font-size:15px;color:#494949;transform:scaleX(0.9674);">Recolor</span>
<span class="t" style="left:141.25px;top:80.30px;font-size:15px;color:#494949;transform:scaleX(0.9431);">Compress Pictures</span>
<span class="t" style="left:141.75px;top:107.30px;font-size:15px;color:#494949;transform:scaleX(0.9328);">Reset Picture</span>
<span class="t" style="left:118.00px;top:164.72px;font-size:14.5px;color:#666666;transform:scaleX(0.8868);">Adjust</span>
<span class="t" style="left:280.50px;top:122.30px;font-size:15px;color:#494949;transform:scaleX(0.9683);">Shadow</span>
<span class="t" style="left:279.50px;top:142.30px;font-size:15px;color:#494949;transform:scaleX(0.9541);">Effects</span>
<span class="t" style="left:306.00px;top:164.72px;font-size:14.5px;color:#666666;transform:scaleX(0.8731);">Shadow Effects</span>
<span class="t" style="left:439.30px;top:122.00px;font-size:15px;color:#494949;transform:scaleX(0.9521);">Picture</span>
<span class="t" style="left:434.60px;top:141.70px;font-size:15px;color:#494949;transform:scaleX(0.9860);">Border</span>
<span class="t" style="left:519.00px;top:91.05px;font-size:15px;color:#494949;transform:scaleX(0.8995);">Dashes</span>
<span class="t" style="left:518.40px;top:128.20px;font-size:15px;color:#494949;transform:scaleX(1.0232);">Weight</span>
<span class="t" style="left:478.50px;top:164.22px;font-size:14.5px;color:#666666;transform:scaleX(0.8959);">Border</span>
<span class="t" style="left:594.40px;top:122.00px;font-size:15px;color:#494949;transform:scaleX(1.0117);">Position</span>
<span class="t" style="left:657.20px;top:122.00px;font-size:15px;color:#494949;transform:scaleX(0.9852);">Wrap</span>
<span class="t" style="left:657.20px;top:141.70px;font-size:15px;color:#494949;transform:scaleX(0.9522);">Text</span>
<span class="t" style="left:717.80px;top:122.00px;font-size:15px;color:#494949;transform:scaleX(0.9477);">Bring</span>
<span class="t" style="left:702.40px;top:141.70px;font-size:15px;color:#494949;transform:scaleX(0.9615);">Forward</span>
<span class="t" style="left:792.40px;top:122.00px;font-size:15px;color:#494949;transform:scaleX(0.9016);">Send</span>
<span class="t" style="left:771.80px;top:141.70px;font-size:15px;color:#494949;transform:scaleX(0.9535);">Backward</span>
<span class="t" style="left:850.60px;top:122.00px;font-size:15px;color:#494949;transform:scaleX(0.9722);">Selection</span>
<span class="t" style="left:865.40px;top:141.70px;font-size:15px;color:#494949;transform:scaleX(0.8874);">Pane</span>
<span class="t" style="left:940.60px;top:80.30px;font-size:15px;color:#494949;transform:scaleX(1.0222);">Align</span>
<span class="t" style="left:940.60px;top:107.00px;font-size:15px;color:#b1b1b1;transform:scaleX(0.9520);">Group</span>
<span class="t" style="left:940.60px;top:133.80px;font-size:15px;color:#494949;transform:scaleX(0.9615);">Rotate</span>
<span class="t" style="left:1019.30px;top:122.00px;font-size:15px;color:#494949;transform:scaleX(0.9626);">Crop</span>
<span class="t" style="left:1086.60px;top:91.05px;font-size:15px;color:#494949;transform:scaleX(1.0036);">Height:</span>
<span class="t" style="left:1086.60px;top:128.20px;font-size:15px;color:#494949;transform:scaleX(1.0067);">Width:</span>
<span class="t" style="left:1099.00px;top:164.22px;font-size:14.5px;color:#666666;transform:scaleX(0.8115);">Size</span>
<span class="t" style="left:1142.00px;top:91.05px;font-size:15px;color:#494949;transform:scaleX(0.9383);">4.84&quot;</span>
<span class="t" style="left:1142.00px;top:128.20px;font-size:15px;color:#494949;transform:scaleX(0.9383);">4.48&quot;</span>
<div class="a" style="left:650px;top:159px;width:216px;height:355px;background:#fff;border:1px solid #c6c6c6;box-sizing:border-box"></div>
<div class="a" style="left:652px;top:190px;width:212px;height:28px;background:#c6c6c6"></div>
<div class="a" style="left:652px;top:302px;width:212px;height:1px;background:#e1e1e1"></div>
<div class="a" style="left:652px;top:359px;width:212px;height:1px;background:#e1e1e1"></div>
<div class="a" style="left:652px;top:388px;width:212px;height:1px;background:#e1e1e1"></div>
<div class="a" style="left:690px;top:450px;width:174px;height:1px;background:#e1e1e1"></div>
<span class="t" style="left:690.50px;top:167.60px;font-size:15px;color:#4a4a4a;"><u>I</u>n Line with Text</span>
<span class="t" style="left:690.00px;top:197.00px;font-size:15px;color:#4a4a4a;transform:scaleX(0.9403);"><u>S</u>quare</span>
<span class="t" style="left:690.00px;top:225.10px;font-size:15px;color:#4a4a4a;transform:scaleX(1.0275);"><u>T</u>ight</span>
<span class="t" style="left:690.80px;top:252.80px;font-size:15px;color:#4a4a4a;transform:scaleX(0.9554);">T<u>h</u>rough</span>
<span class="t" style="left:690.80px;top:280.60px;font-size:15px;color:#4a4a4a;transform:scaleX(1.0230);">T<u>o</u>p and Bottom</span>
<span class="t" style="left:690.80px;top:309.50px;font-size:15px;color:#4a4a4a;transform:scaleX(0.9818);">Behin<u>d</u> Text</span>
<span class="t" style="left:690.30px;top:338.00px;font-size:15px;color:#4a4a4a;transform:scaleX(0.9962);">I<u>n</u> Front of Text</span>
<span class="t" style="left:690.30px;top:367.20px;font-size:15px;color:#4a4a4a;transform:scaleX(0.9843);"><u>E</u>dit Wrap Points</span>
<span class="t" style="left:688.10px;top:398.00px;font-size:15px;color:#4a4a4a;transform:scaleX(1.0188);"><u>M</u>ove with Text</span>
<span class="t" style="left:688.10px;top:427.80px;font-size:15px;color:#4a4a4a;transform:scaleX(0.9630);"><u>F</u>ix Position on Page</span>
<span class="t" style="left:688.10px;top:459.80px;font-size:15px;color:#4a4a4a;transform:scaleX(0.9713);">More <u>L</u>ayout Options...</span>
<span class="t" style="left:688.10px;top:489.60px;font-size:15px;color:#4a4a4a;transform:scaleX(0.9753);">Set as Def<u>a</u>ult Layout</span>
<svg width="1920" height="1080" viewBox="0 0 1920 1080"><rect x="657" y="165.7" width="18" height="1.4" fill="#41719c"/><rect x="657" y="176.4" width="18" height="1.5" fill="#41719c"/><rect x="654.5" y="192.7" width="23" height="22.7" fill="#dcebfb" stroke="#c2d5ee" stroke-width="1"/><path d="M657.2 196.5H675" stroke="#41719c" stroke-width="1"/><path d="M657.2 208.7H675" stroke="#41719c" stroke-width="1"/><path d="M657.2 211.6H675" stroke="#41719c" stroke-width="1"/><path d="M657.2 199.5H660.3" stroke="#41719c" stroke-width="1"/><path d="M671.7 199.5H675" stroke="#41719c" stroke-width="1"/><path d="M657.2 202.6H660.3" stroke="#41719c" stroke-width="1"/><path d="M671.7 202.6H675" stroke="#41719c" stroke-width="1"/><path d="M657.2 205.7H660.3" stroke="#41719c" stroke-width="1"/><path d="M671.7 205.7H675" stroke="#41719c" stroke-width="1"/><path d="M661 206.6a5 5 0 0 1 10 0h-2.6a2.4 2.4 0 0 0 -4.8 0z" fill="#777"/><path d="M657.2 230.5H660.8" stroke="#41719c" stroke-width="1"/><path d="M671.2 230.5H675" stroke="#41719c" stroke-width="1"/><path d="M657.2 233.7H659.8" stroke="#41719c" stroke-width="1"/><path d="M672.2 233.7H675" stroke="#41719c" stroke-width="1"/><path d="M657.2 236.7H675" stroke="#41719c" stroke-width="1"/><path d="M657.2 239.6H675" stroke="#41719c" stroke-width="1"/><path d="M661 234.6a5 5 0 0 1 10 0h-2.6a2.4 2.4 0 0 0 -4.8 0z" fill="#777"/><path d="M657.2 252.7H675" stroke="#41719c" stroke-width="1"/><path d="M657.2 255.8H675" stroke="#41719c" stroke-width="1"/><path d="M657.2 264.8H675" stroke="#41719c" stroke-width="1"/><path d="M657.2 267.8H675" stroke="#41719c" stroke-width="1"/><path d="M657.2 258.8H660.3" stroke="#41719c" stroke-width="1"/><path d="M671.7 258.8H675" stroke="#41719c" stroke-width="1"/><path d="M657.2 261.8H660.3" stroke="#41719c" stroke-width="1"/><path d="M671.7 261.8H675" stroke="#41719c" stroke-width="1"/><path d="M661 262.4a5 5 0 0 1 10 0h-2.6a2.4 2.4 0 0 0 -4.8 0z" fill="#777"/><rect x="665.2" y="260.8" width="1.6" height="1.2" fill="#41719c"/><path d="M657.2 280.4H675" stroke="#41719c" stroke-width="1"/><path d="M657.2 283.5H675" stroke="#41719c" stroke-width="1"/><path d="M657.2 292.6H675" stroke="#41719c" stroke-width="1"/><path d="M657.2 295.6H675" stroke="#41719c" stroke-width="1"/><path d="M661 290.4a5 5 0 0 1 10 0h-2.6a2.4 2.4 0 0 0 -4.8 0z" fill="#777"/><path d="M657.2 309.6H675" stroke="#41719c" stroke-width="1"/><path d="M657.2 313.2H675" stroke="#41719c" stroke-width="1"/><path d="M657.2 316.8H675" stroke="#41719c" stroke-width="1"/><path d="M657.2 320.4H675" stroke="#41719c" stroke-width="1"/><path d="M657.2 324H675" stroke="#41719c" stroke-width="1"/><path d="M661.4 318a4.6 4.6 0 0 1 9.2 0h-1.7999999999999998a2.8 2.8 0 0 0 -5.6 0z" fill="#b9c6d6"/><path d="M657.2 337.6H675" stroke="#41719c" stroke-width="1"/><path d="M657.2 341.3H675" stroke="#41719c" stroke-width="1"/><path d="M657.2 345H675" stroke="#41719c" stroke-width="1"/><path d="M657.2 348.7H675" stroke="#41719c" stroke-width="1"/><path d="M657.2 352.4H675" stroke="#41719c" stroke-width="1"/><path d="M661 347a5 5 0 0 1 10 0h-2.8a2.2 2.2 0 0 0 -4.4 0z" fill="#555"/><path d="M663.3 366.5h10v14.8h-15v-9.3z" fill="none" stroke="#41719c" stroke-width="1"/><rect x="661.9" y="365.1" width="2.8" height="2.8" fill="#41719c"/><rect x="671.9" y="365.1" width="2.8" height="2.8" fill="#41719c"/><rect x="671.9" y="379.90000000000003" width="2.8" height="2.8" fill="#41719c"/><rect x="656.9" y="379.90000000000003" width="2.8" height="2.8" fill="#41719c"/><rect x="656.9" y="370.6" width="2.8" height="2.8" fill="#41719c"/><path d="M661.2 377.3a4.8 4.8 0 0 1 9.6 0h-2.4a2.4 2.4 0 0 0 -4.8 0z" fill="#777"/><path d="M662.2 435.3l3.3 3.2 5.9-7.6" fill="none" stroke="#555" stroke-width="1.7"/><path d="M657.2 458.5H675" stroke="#c3ccd6" stroke-width="1"/><path d="M657.2 461.5H675" stroke="#c3ccd6" stroke-width="1"/><path d="M657.2 464.5H675" stroke="#c3ccd6" stroke-width="1"/><path d="M657.2 467.5H675" stroke="#c3ccd6" stroke-width="1"/><path d="M657.2 470.5H675" stroke="#c3ccd6" stroke-width="1"/><path d="M657.2 473.5H675" stroke="#c3ccd6" stroke-width="1"/><rect x="662.8" y="462.3" width="9.6" height="8" fill="#fff" stroke="#666" stroke-width="1.2"/><rect x="661.3" y="460.8" width="3" height="3" fill="#666"/><rect x="670.9" y="460.8" width="3" height="3" fill="#666"/><rect x="661.3" y="468.8" width="3" height="3" fill="#666"/><rect x="670.9" y="468.8" width="3" height="3" fill="#666"/></svg>
<div class="a" style="left:637px;top:59px;width:75px;height:116px;border:8px solid #aee01f;box-sizing:border-box"></div>
<div class="a" style="left:632px;top:178.4px;width:246px;height:50px;border:8px solid #aee01f;box-sizing:border-box"></div>
<svg width="1920" height="1080" viewBox="0 0 1920 1080"><path d="M715.8 201.2v16.2l3.7-3.5 2.6 5.8 2.3-1-2.6-5.7 5-0.2z" fill="#fff" stroke="#000" stroke-width="1"/></svg>
</div>
</body></html>
